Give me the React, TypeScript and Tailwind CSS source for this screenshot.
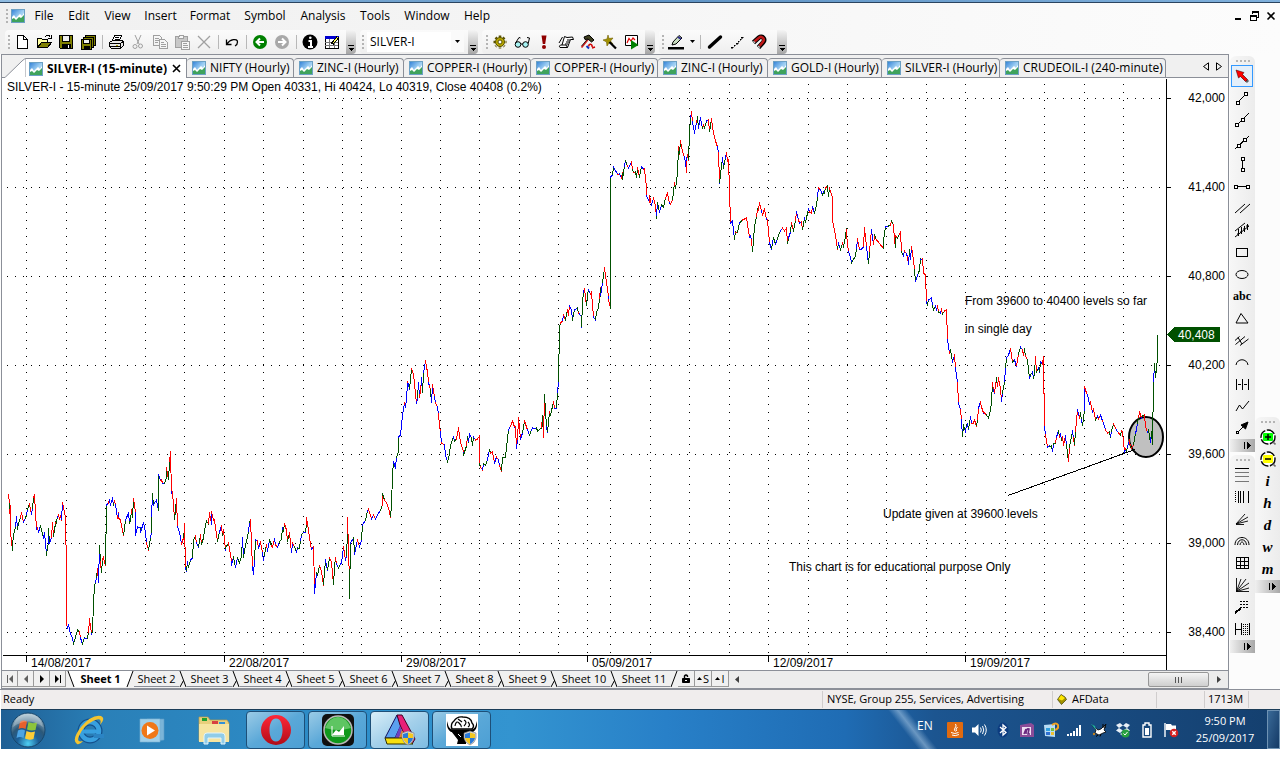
import React, { useState } from 'react';
import clsx from 'clsx';

type Children = { children?: React.ReactNode };

const UI_FONT = "font-['Open_Sans','Noto_Sans',sans-serif]";

/* ---------- data ---------- */

const menus = [
  { label: 'File', width: 'w-[34px]' },
  { label: 'Edit', width: 'w-[36px]' },
  { label: 'View', width: 'w-[41px]' },
  { label: 'Insert', width: 'w-[45px]' },
  { label: 'Format', width: 'w-[54px]' },
  { label: 'Symbol', width: 'w-[56px]' },
  { label: 'Analysis', width: 'w-[60px]' },
  { label: 'Tools', width: 'w-[44px]' },
  { label: 'Window', width: 'w-[60px]' },
  { label: 'Help', width: 'w-[40px]' },
];

const chartTabs = [
  { label: 'NIFTY (Hourly)', width: 'w-[107px]' },
  { label: 'ZINC-I (Hourly)', width: 'w-[110px]' },
  { label: 'COPPER-I (Hourly)', width: 'w-[127px]' },
  { label: 'COPPER-I (Hourly)', width: 'w-[127px]' },
  { label: 'ZINC-I (Hourly)', width: 'w-[110px]' },
  { label: 'GOLD-I (Hourly)', width: 'w-[114px]' },
  { label: 'SILVER-I (Hourly)', width: 'w-[118px]' },
  { label: 'CRUDEOIL-I (240-minute)', width: 'w-[166px]' },
];

const priceLevels = [
  ['42,000', 98],
  ['41,400', 187],
  ['40,800', 276],
  ['40,200', 365],
  ['39,600', 454],
  ['39,000', 543],
  ['38,400', 632],
] as const;

const dayLines = [
  26, 66, 105, 145, 184, 224, 263, 303, 342, 361, 401, 440, 479, 519, 558, 587, 610, 650, 689, 729, 768, 808, 847,
  886, 926, 965, 1005, 1044, 1084, 1123,
];

const dates = [
  ['14/08/2017', 26],
  ['22/08/2017', 224],
  ['29/08/2017', 401],
  ['05/09/2017', 587],
  ['12/09/2017', 768],
  ['19/09/2017', 965],
] as const;

const series = `
8,495r 9,503r 9,513g 10,506r 10,532r 12,550r 12,545g 13,535g 15,527g 16,517b 17,529b 18,524g 20,517g 21,513r 23,522r 25,518b 26,515g 27,509b 29,504g
31,514r 32,509b 33,497g 34,495r 36,529r 36,525b 38,532r 40,526b 43,538g 44,533b 45,543b 46,555b 47,548g 48,543g 48,529b 49,543g
51,538b 52,523r 53,537r 55,522g 55,526r 57,517g 58,515b 59,519r 61,514r 61,520r 62,503b 64,512r 65,518r 66,570r 66,623r
67,628r 68,625b 70,634b 72,638b 73,644b 75,637g 77,630g 79,632g 80,638r 82,644b 83,640g 84,638g 87,638b 88,633g 89,619r 91,634r 91,632b 92,632g
93,602g 94,587g 95,582g 96,578b 97,569g 98,583r 99,546b 100,562g 101,573r 102,560g 103,557r 104,563r 105,565r 106,505g 108,503b 109,500r 110,505b 112,498b
113,505b 114,501g 115,505r 117,518b 118,513r 118,518b 120,520r 123,535r 124,529g 125,520g 128,513b 129,523b 130,520g 131,510g 132,518r 133,499g
135,512r 135,535b 137,527b 140,528b 140,532g 143,523b 145,532b 146,543b 148,550r 150,538g 151,532b 151,517g 152,494b 153,505g 154,503b 156,500b
158,510b 158,475g 160,480b 161,480r 162,483r 164,483b 166,478g 166,468g 168,480r 169,462g 170,452r 171,493r 171,487b 173,503r 174,520r 176,499g
177,527r 179,532b 181,544b 183,538r 184,528g 184,524r 185,568r 186,571b 187,562g 188,567b 190,560g 192,558b 193,540g 195,536g 196,543r
198,547b 200,535g 201,544r 203,538g 204,530g 206,521g 208,524g 209,513r 211,524r 211,512b 213,520r 214,520r 217,541r 219,532g 221,526b 222,536r 223,530g 225,550r 225,548b
228,543g 231,561r 231,565b 233,557b 235,567g 237,558b 239,563g 241,556g 242,538g 243,558b 244,550g 246,541g 248,532g 249,522b 250,520g 252,567r
253,574b 254,560b 255,540g 257,541b 258,548r 260,542b 262,553r 263,560b 264,555b 266,545g 267,551r 269,540b 271,546g 272,547r 274,539r 275,545b
277,547r 279,542b 281,539g 282,528g 283,531b 284,524g 286,530r 287,541r 289,533g 291,553r 292,543b 294,547r 296,552g 297,548b 299,548g 300,541g
301,535b 303,532g 305,532b 306,524g 306,518r 308,530r 310,544r 311,549r 313,547b 314,584r 314,593b 316,573b 317,575g 319,566g 321,571r
323,585r 324,572g 325,560g 327,570b 329,558g 331,562r 333,585r 334,567g 335,558g 336,564r 338,568b 340,564g 341,563b 343,547b 345,560r 346,556b
347,533g 347,518r 349,582r 349,598g 350,543g 353,538b 354,552g 354,554b 357,540b 359,547r 361,540b 362,525g 365,520b 367,511g 368,510b 368,509r 371,519r
373,515b 375,519r 377,515b 380,510b 382,505g 382,494r 384,500g 386,503r 388,508r 390,517r 391,505g 392,475g 393,462g 395,468b 396,457b 398,452g 398,437g
400,435b 402,415b 404,403b 405,407r 406,400b 407,382b 408,384r 409,389b 411,369g 413,374r 414,384r 416,404r 417,398b 418,383g 419,397b 420,392r 421,378r 422,393b
423,373g 425,361b 427,373r 427,370g 428,383r 429,386b 430,390r 431,403g 432,385b 434,397r 435,403b 437,407r 438,414b 439,425r 440,432r 441,443b 444,445r 445,455b 447,462b 449,454g
450,445g 453,437g 454,441b 456,439g 458,428r 460,442r 463,452r 463,455b 466,446g 467,437r 468,442g 469,434b 471,438b 472,445g 473,437g 475,440b 477,439r 479,436r
479,464r 480,467g 482,470r 483,464b 485,465g 487,460g 489,450b 490,453g 492,452r 494,463r 496,457b 498,460r 499,466b 501,471r 502,458g 505,457g 506,448g 508,430g 510,426b
512,421r 514,427r 515,427b 516,449r 517,440b 518,418r 520,439r 522,433b 523,427g 524,421g 527,430r 529,435b 531,430g 532,428b 536,428b 537,431g 541,428g 542,416r
543,438g 544,395r 546,427g 547,432b 549,412g 550,415r 553,402g 554,408r 556,408b 557,393g 558,382b 559,328g 560,323g 562,321r 563,315b 565,320r 567,310g 568,315r 569,306r
571,310b 572,320b 574,310g 577,308b 578,313g 579,314r 581,317b 581,327b 582,303g 583,292g 584,289b 586,306r 587,295g 588,290g 590,294b 591,292r 592,305r 593,317r 595,320b 596,312g 598,308g 599,299g 600,288r
600,296g 602,283b 604,268g 606,283r 608,296r 608,300b 610,308r 610,177g 612,175b 613,167g 614,169b 617,174b 619,174r 621,178b 622,173r 622,179g 624,166g 625,161b 627,166g 628,168r 631,162b 632,170r 633,172g 635,172r
636,178g 637,168g 639,177r 641,167g 643,169b 644,169r 646,187r 646,196r 649,202b 649,196r 651,205r 653,198b 655,206r 656,218r 656,216g 657,203b 659,212g 661,205b 663,207g 665,198g 667,193r 669,203r
670,204b 672,200r 674,183g 675,189r 677,173g 678,147g 679,154r 680,141g 682,152r 684,157r 685,162b 686,172b 686,160r 687,155b 688,160r 689,133g 690,118g 691,112b 692,122r 694,133b 696,123b 697,117r 698,128g 700,118b
702,128b 703,125g 704,128r 706,121g 708,120b 709,132r 711,119g 713,133r 715,141r 717,147r 718,153b 719,180r 719,183b 722,158g 723,168b 725,158g 726,153b 727,161r 728,160r 729,190r 730,223r 732,221b 734,239b
735,232g 737,232r 739,223g 740,222b 742,220g 746,218r 749,237r 750,236b 751,240b 752,252r 753,240g 754,227g 756,217g 757,209r 758,210g 759,203r 761,211r 762,215b 764,209r 766,219r 767,220b 769,243r 771,249b 772,243g
773,238b 775,244g 777,239b 778,235g 780,231g 782,228b 784,231r 786,228r 787,244r 788,238g 790,232b 791,223g 793,231r 795,221g 796,212r 798,220b 799,223r 801,222b 802,230r 804,218g 805,222b 808,209g 809,212b 811,213r
812,207r 814,213b 816,205g 817,197g 818,188b 820,190r 822,195b 823,192g 824,193b 825,188g 827,186r 828,197g 829,188g 831,195r 832,197r 832,220r 835,235r 837,249r 838,243g 840,250b 842,243g 843,247r 844,242g 846,229g 846,235r 848,252r
850,257b 851,263b 855,256g 856,249g 857,239b 859,249r 861,249b 863,247b 864,228r 866,247r 868,264b 869,252g 871,230r 873,245b 874,235r 876,240g 878,242r 880,245r 883,248r 883,240g 885,227g 888,226b 890,225g 891,221r 893,225g
894,240r 895,247r 895,236g 897,238r 899,234g 900,232r 901,252r 903,256g 904,251b 906,254r 907,257b 908,265r 909,250b 910,260g 911,247b 913,260r 914,270r 915,281g 918,273b 919,270g 920,259g 922,259b 923,273r 925,275r 926,302r 927,305b
928,300g 931,298b 932,306b 933,310g 935,306g 936,310b 937,306b 938,312r 940,313g 941,309b 942,314r 944,311g 946,310r 947,340r 949,353b 950,350r 952,362g 954,355b 955,368r 957,383b 958,403r 960,410b 961,420r 962,437b
963,425g 965,432g 966,425b 967,424g 968,429b 970,417g 971,423b 973,423r 974,420r 976,426r 977,420g 978,408r 980,402b 981,407r 983,413r 984,413b 986,415r 988,418g 990,410g 991,402g 992,383g 993,390r 994,393b 996,378r 997,387g 998,378r
1000,388r 1001,402r 1002,393b 1004,382g 1005,368b 1006,358g 1008,355b 1010,349b 1012,362r 1014,360g 1016,366b 1018,354r 1020,347g 1022,350b 1023,355r 1024,349r 1025,356g 1027,360r 1029,378g 1030,375b 1032,372g 1033,378b 1034,374g 1035,357g
1036,372r 1038,368g 1039,372b 1040,362g 1042,364b 1043,357r 1044,427r 1045,435b 1047,447r 1049,446b 1051,446g 1052,452g 1053,444b 1055,443g 1056,437r 1058,431b 1059,437g 1060,434r 1061,440b 1062,437g 1063,445r 1065,436r 1066,445b 1068,462g 1069,447r
1070,442g 1072,431g 1073,438b 1074,445r 1075,432g 1077,410r 1079,418b 1080,413r 1081,420g 1082,426b 1084,410g 1084,387b 1086,393r 1087,395r 1089,404b 1090,402b 1092,412r 1093,409b 1095,420r 1097,416g 1098,419b 1100,415r 1102,421b
1103,423r 1105,430b 1107,433r 1109,432r 1110,437g 1111,431b 1113,424g 1116,430r 1118,433b 1120,435r 1121,431g 1122,432r 1124,452r 1125,449b 1126,451r 1127,447g 1129,440b 1130,447r 1131,448g 1133,445r 1135,433g 1136,430b 1137,423b 1138,418g 1139,412r 1141,418r
1142,416b 1144,415g 1145,427r 1147,432r 1148,430b 1150,443g 1151,432b 1152,445g 1153,382g 1154,364b 1155,378g 1157,358g 1157,335g`;

const barColor: Record<string, string> = { r: '#ff0000', g: '#005000', b: '#0000ff' };

const bars = series
  .trim()
  .split(/\s+/)
  .map((item) => {
    const [x, y] = item.slice(0, -1).split(',').map(Number);
    return { x, y, color: barColor[item.slice(-1)] };
  });

/* ---------- small shared pieces ---------- */

const Px: React.FC<Children & { size?: 'sm' | 'md' }> = ({ children, size = 'md' }) => (
  <svg
    viewBox="0 0 16 16"
    fill="none"
    stroke="#000"
    shapeRendering={size === 'md' ? 'crispEdges' : 'auto'}
    className="w-4 h-4 shrink-0"
  >
    {children}
  </svg>
);

const ChartIcon = () => (
  <svg viewBox="0 0 14 14" className="w-[14px] h-[14px] shrink-0">
    <defs>
      <linearGradient id="sky" x1="0" y1="0" x2="1" y2="1">
        <stop offset="0" stopColor="#2f7fd6" />
        <stop offset="0.5" stopColor="#9ccdf2" />
        <stop offset="1" stopColor="#d8eefa" />
      </linearGradient>
    </defs>
    <rect x="0.5" y="0.5" width="13" height="13" fill="url(#sky)" stroke="#6ba0c4" />
    <path d="M1 8 L3 6 L5 9 L7 7 L9 5 L11 7 L13 4 V13 H1 Z" fill="#fff" />
    <path d="M1 10 L3 9 L5 11 L8 8 L10 9 L13 6 V13 H1 Z" fill="#3fa35c" />
  </svg>
);

const Grip = () => (
  <span className="flex flex-col gap-[2px] w-[5px] pl-[2px] shrink-0">
    {[0, 1, 2, 3].map((i) => (
      <span key={i} className="w-[2px] h-[2px] bg-[#b4b4b4]" />
    ))}
  </span>
);

const Sep = () => (
  <span className="w-[6px] flex justify-center shrink-0">
    <span className="w-px h-[14px] bg-[#b8b8b8]" />
  </span>
);

const ToolButton: React.FC<Children & { label: string; wide?: string }> = ({ children, label, wide = 'w-[22px]' }) => (
  <button aria-label={label} className={clsx('h-[22px] flex items-center justify-center shrink-0', wide)}>
    {children}
  </button>
);

const Overflow = () => (
  <button
    aria-label="Toolbar options"
    className="w-[10px] h-[24px] flex items-end justify-center pb-[2px] shrink-0 rounded-r-sm bg-linear-to-b from-[#f4f4f4] to-[#a6a6a6]"
  >
    <svg viewBox="0 0 6 7" className="w-[6px] h-[7px]" shapeRendering="crispEdges">
      <path d="M0 0h6v1h-6z M0 3h6l-3 3z" fill="#000" />
    </svg>
  </button>
);

const Bar: React.FC<Children & { pad: string }> = ({ children, pad }) => (
  <div className="flex items-center h-[24px] rounded-sm bg-linear-to-b from-[#fbfbfb] to-[#eeeeee] shrink-0">
    <div className={clsx('flex items-center', pad)}>{children}</div>
    <Overflow />
  </div>
);

/* ---------- top ---------- */

const MenuBar = () => (
  <div className="flex items-center h-[26px] pl-1 pr-[3px]">
    <Grip />
    <span className="w-[18px] pl-[2px] flex">
      <ChartIcon />
    </span>
    <nav className="flex flex-1 items-center">
      {menus.map((m) => (
        <button key={m.label} className={clsx('text-center whitespace-nowrap', m.width)}>
          {m.label}
        </button>
      ))}
    </nav>
    <div className="flex items-center gap-1">
      <button aria-label="Minimize">
        <svg viewBox="0 0 12 12" className="w-3 h-3" shapeRendering="crispEdges">
          <path d="M3 8h6v2h-6z" />
        </svg>
      </button>
      <button aria-label="Restore">
        <svg viewBox="0 0 12 12" className="w-3 h-3" fill="none" stroke="#000" shapeRendering="crispEdges">
          <path d="M4.5 4V2.5H10.5V7.5H8 M4 1.5h7 M2.5 5.5H8.5V10.5H2.5Z M2 6.5h7" />
        </svg>
      </button>
      <button aria-label="Close" className="ml-px">
        <svg viewBox="0 0 12 12" className="w-3 h-3" fill="none" stroke="#000" strokeWidth="1.6">
          <path d="M2.5 2.5l7 7M9.5 2.5l-7 7" />
        </svg>
      </button>
    </div>
  </div>
);

const Toolbars = () => {
  const [symbol, setSymbol] = useState('SILVER-I');

  return (
    <div className="flex items-center h-[25px] pl-[5px] gap-1">
      <Bar pad="pl-px pr-[3px]">
        <Grip />
        <ToolButton label="New">
          <Px><path d="M3.5 1.5H9.5L13.5 5.5V14.5H3.5Z M9.5 1.5V5.5H13.5" fill="#fff" /></Px>
        </ToolButton>
        <ToolButton label="Open">
          <Px>
            <path d="M1.5 13.5V4.5H5.5L6.5 5.5H11.5V8.5" fill="#ffffa0" />
            <path d="M1.5 13.5L5.5 8.5H15.5L11.5 13.5Z" fill="#808000" />
            <path d="M9 2.5L11 1.5H13L14.5 3.5M15 1V4.5H12" />
          </Px>
        </ToolButton>
        <ToolButton label="Save">
          <Px>
            <path d="M1.5 1.5H14.5V14.5H2.5L1.5 13.5Z" fill="#808000" />
            <path d="M4.5 1.5H11.5V7.5H4.5Z" fill="#f0f0f0" />
            <path d="M4.5 10.5H12.5V14.5H4.5Z" fill="#000" />
            <path d="M10.5 11V14" stroke="#fff" />
          </Px>
        </ToolButton>
        <ToolButton label="Save all">
          <Px>
            <path d="M5.5 1.5H15.5V11.5H5.5Z" fill="#808000" />
            <path d="M3.5 3.5H13.5V13.5H3.5Z" fill="#808000" />
            <path d="M1.5 5.5H11.5V15.5H1.5Z" fill="#808000" />
            <path d="M3.5 5.5H9.5V9.5H3.5Z" fill="#f0f0f0" />
            <path d="M4.5 12.5H9.5V15.5H4.5Z" fill="#000" />
          </Px>
        </ToolButton>
        <Sep />
        <ToolButton label="Print">
          <Px>
            <path d="M4.5 6.5L6.5 1.5H13.5L11.5 6.5" fill="#fff" />
            <path d="M7 3.5h4M6.5 5h4" />
            <path d="M1.5 8.5L4.5 6.5H13.5L15.5 7.5V11.5L12.5 14.5H3.5L1.5 12.5Z" fill="#e8e8e8" />
            <path d="M1.5 9.5H12.5V14.5M2 12.5H12M12.5 9.5L15 7.5" />
            <path d="M8 11.5h2" stroke="#b0a000" />
          </Px>
        </ToolButton>
        <ToolButton label="Cut">
          <Px size="sm">
            <g stroke="#a0a0a0"><path d="M5 1L9 10M11 1L7 10" /><circle cx="5" cy="12.5" r="2" /><circle cx="10.5" cy="12" r="2" /></g>
          </Px>
        </ToolButton>
        <ToolButton label="Copy">
          <Px>
            <g stroke="#a0a0a0"><path d="M1.5 1.5H7.5L9.5 3.5V11.5H1.5Z M3 4.5h4M3 6.5h4M3 8.5h3" /><path d="M7.5 5.5H12.5L15.5 8.5V14.5H7.5Z" fill="#f6f6f6" /><path d="M9 8.5h3M9 10.5h5M9 12.5h5" /></g>
          </Px>
        </ToolButton>
        <ToolButton label="Paste">
          <Px>
            <g stroke="#a0a0a0"><path d="M1.5 2.5H13.5V13.5H1.5Z" fill="#c8c8c8" /><path d="M5.5 1.5H9.5V4.5H4.5Z" fill="#f6f6f6" /><path d="M7.5 7.5H15.5V15H7.5Z" fill="#f6f6f6" /><path d="M9 9.5h4M9 11.5h5M9 13.5h5" /></g>
          </Px>
        </ToolButton>
        <ToolButton label="Delete">
          <Px size="sm"><path d="M2 2L14 14M14 2L2 14" stroke="#a0a0a0" strokeWidth="1.3" /></Px>
        </ToolButton>
        <Sep />
        <ToolButton label="Undo">
          <Px size="sm"><path d="M2.5 5.5V10.500H7.500M3 10C6 5 13.500 4 13.500 8C13.500 10.500 12 11.500 11 12" strokeWidth="1.3" /></Px>
        </ToolButton>
        <Sep />
        <ToolButton label="Back">
          <Px size="sm">
            <circle cx="8" cy="8" r="7" fill="#008000" stroke="none" />
            <path d="M12 8H5M8 4.5L4.5 8L8 11.5" stroke="#fff" strokeWidth="2" />
          </Px>
        </ToolButton>
        <ToolButton label="Forward">
          <Px size="sm">
            <circle cx="8" cy="8" r="7" fill="#a8a8a8" stroke="none" />
            <path d="M4 8H11M8 4.5L11.5 8L8 11.5" stroke="#fff" strokeWidth="2" />
          </Px>
        </ToolButton>
        <Sep />
        <ToolButton label="Information">
          <Px size="sm">
            <circle cx="8" cy="8" r="7.5" fill="#000" stroke="none" />
            <path d="M6.5 7H9V13M6 13H11" stroke="#fff" strokeWidth="2" />
            <circle cx="8.3" cy="3.8" r="1.3" fill="#fff" stroke="none" />
          </Px>
        </ToolButton>
        <ToolButton label="Quote editor">
          <Px>
            <path d="M1.5 2.5H14.5V14.5H1.5Z" fill="#fff" />
            <path d="M1 2h14v3H1z" fill="#0000d0" stroke="none" />
            <path d="M1 8.5h13M1 11.5h13M5.5 5v9M10.5 5v9" stroke="#777" />
            <path d="M8 10L14 3" stroke="#000" strokeWidth="3" />
            <path d="M9 9L14 3" stroke="#ffff60" />
          </Px>
        </ToolButton>
      </Bar>

      <Bar pad="pr-1">
        <Grip />
        <input
          aria-label="Symbol"
          value={symbol}
          onChange={(e) => setSymbol(e.target.value)}
          className="w-[84px] h-[20px] bg-white pl-[3px] ml-[2px] outline-none"
        />
        <button aria-label="Choose symbol" className="w-[13px] h-[20px] bg-[#fafafa] flex items-center justify-center">
          <svg viewBox="0 0 5 3" className="w-[5px] h-[3px]"><path d="M0 0h5l-2.500 3z" /></svg>
        </button>
      </Bar>

      <Bar pad="pl-[2px] pr-[2px]">
        <Grip />
        <ToolButton label="Settings">
          <Px size="sm">
            <path d="M8 1.500v13M1.500 8h13M3.500 3.500l9 9M12.500 3.500l-9 9" stroke="#5a5200" strokeWidth="2.600" strokeDasharray="2 1" />
            <circle cx="8" cy="8" r="4.500" fill="#b8a800" stroke="#5a5200" />
            <circle cx="8" cy="8" r="2" fill="#fff" stroke="#5a5200" />
          </Px>
        </ToolButton>
        <ToolButton label="Explore">
          <Px size="sm">
            <circle cx="4" cy="10.500" r="2.800" fill="#a8f4f4" />
            <circle cx="11.500" cy="10.500" r="2.800" fill="#a8f4f4" />
            <path d="M7 10H9M1.500 9L5 3.500L6.500 4M14.200 9.500L15.500 4L13 3.500" />
          </Px>
        </ToolButton>
        <ToolButton label="Alerts">
          <Px size="sm"><path d="M5.500 1.500H10.500L9.200 10H6.800Z" fill="#900000" stroke="none" /><circle cx="8" cy="13" r="2" fill="#900000" stroke="none" /></Px>
        </ToolButton>
        <ToolButton label="Formulas">
          <Px size="sm">
            <path d="M6.500 2.500L4 11H2.500Q0.500 12 2 13.500H9.500L12.500 5.500H15.500L14.500 3L9 3.500Z" fill="#fff" />
            <path d="M9 6h3M8 8h3M7 10h3M4 11H8L9.500 13.500M1 9L4.500 3" />
          </Px>
        </ToolButton>
        <ToolButton label="Build">
          <Px size="sm">
            <path d="M1.500 13.500L8 5.500" stroke="#d02020" strokeWidth="1.800" />
            <path d="M1.500 12L8 4.500" strokeWidth="0.800" />
            <path d="M4 3L9 1L14 6L11.500 8L8 5L5 5.500Z" fill="#404020" />
            <path d="M9 12.500C8 9 13 10 12 13M12 14L15 13" stroke="#d00000" strokeWidth="1.600" />
            <path d="M6.500 12L9 14.500" stroke="#1030c0" strokeWidth="2" />
          </Px>
        </ToolButton>
        <ToolButton label="Wizard">
          <Px size="sm">
            <path d="M6 1L7 4.500L11 4L8.500 7L11 10L7 9L5 12L4.500 8L1 6L5 5Z" fill="#a09000" stroke="#706000" strokeWidth="0.600" />
            <path d="M7.500 8L14 14.500" strokeWidth="2.200" />
          </Px>
        </ToolButton>
        <ToolButton label="Run">
          <Px size="sm">
            <path d="M1.500 1.500H13.500V11.500H1.500Z" fill="#fff" />
            <path d="M3 9L5 4.500L7 7L9 4L11 6" stroke="#e00000" strokeWidth="1.200" />
            <path d="M7 6V15.500L14.500 11Z" fill="#008000" stroke="none" />
          </Px>
        </ToolButton>
      </Bar>

      <Bar pad="pl-px pr-[6px]">
        <Grip />
        <ToolButton label="Line colour">
          <Px size="sm">
            <path d="M5 8L11 1.500L14 4L8 10L4 11Z" fill="#c8dcc0" />
            <path d="M10 3L13 5" stroke="#303090" strokeWidth="2" />
            <path d="M0 13h16v2.500H0z" fill="#000" stroke="none" />
          </Px>
        </ToolButton>
        <ToolButton label="Choose line colour" wide="w-[10px]">
          <svg viewBox="0 0 5 3" className="w-[5px] h-[3px]"><path d="M0 0h5l-2.500 3z" /></svg>
        </ToolButton>
        <Sep />
        <ToolButton label="Thick line" wide="w-6">
          <Px size="sm"><path d="M2.500 13L13.500 3" strokeWidth="3.400" strokeLinecap="round" /></Px>
        </ToolButton>
        <ToolButton label="Dotted line" wide="w-[20px]">
          <Px><path d="M2 13h2v1h-2z M5 11h1v1h-1z M7 9h2v1h-2z M9 7h1v1h-1z M11 5h1v1h-1z M12 3h2v1h-2z" stroke="#000" strokeWidth="0.500" fill="#000" /></Px>
        </ToolButton>
        <ToolButton label="Magnet" wide="w-6">
          <Px size="sm">
            <path d="M2.500 8.500L8 3.500C11 1 15 5 12 8.500L7.500 13.500" strokeWidth="4.600" />
            <path d="M3.500 7.500L8 3.700C10.800 1.500 14.500 5 11.700 8.200L8.500 12" stroke="#c01818" strokeWidth="2.600" />
            <path d="M2.500 7L4 9M7 12L9 13.500" stroke="#ccc" strokeWidth="1.200" />
          </Px>
        </ToolButton>
      </Bar>
    </div>
  );
};

/* ---------- chart pane ---------- */

const ChartTabs = () => (
  <div className="flex items-end h-[23px] bg-[#f0f0f0] border-b border-[#8b8f98] text-[12px]">
    <div className="flex -mb-px h-[20px] items-stretch">
      <svg viewBox="0 0 24 20" className="w-6 h-5 shrink-0">
        <path d="M3 19.500L20 3Q22.500 0.500 24 0.500V20H3" fill="#fff" stroke="#8b8f98" />
        <path d="M3.500 19h21v1h-21z" fill="#fff" />
      </svg>
      <div className="w-[161px] bg-white border-t border-r border-[#8b8f98] flex items-center font-bold whitespace-nowrap pl-[3px] pr-[5px]">
        <ChartIcon />
        <button className="pl-[4px] flex-1 text-left">SILVER-I (15-minute)</button>
        <button aria-label="Close tab">
          <svg viewBox="0 0 9 9" className="w-[9px] h-[9px]" fill="none" stroke="#000" strokeWidth="1.600"><path d="M1 1l7 7M8 1l-7 7" /></svg>
        </button>
      </div>
    </div>
    {chartTabs.map((t, i) => (
      <button
        key={i}
        className={clsx(
          'h-[19px] flex items-center gap-1 pl-[5px] border-t border-r border-[#8b8f98] rounded-t-sm whitespace-nowrap',
          t.width
        )}
      >
        <ChartIcon />
        {t.label}
      </button>
    ))}
    <div className="flex-1 h-full flex items-center justify-end gap-[5px] pr-[5px]">
      <button aria-label="Previous tabs">
        <svg viewBox="0 0 8 9" className="w-2 h-[9px]" fill="none" stroke="#000"><path d="M6.500 0.800V8.200L1.500 4.500Z" /></svg>
      </button>
      <button aria-label="Next tabs">
        <svg viewBox="0 0 8 9" className="w-2 h-[9px]" fill="none" stroke="#000"><path d="M1.500 0.800V8.200L6.500 4.500Z" /></svg>
      </button>
    </div>
  </div>
);

const PriceChart = () => (
  <svg
    viewBox="2 78 1226 592"
    className="block w-full h-auto bg-white font-['Liberation_Sans',Arial,sans-serif] text-[12px]"
    shapeRendering="crispEdges"
  >
    {priceLevels.map(([label, y]) => (
      <g key={label}>
        <path d={`M7 ${y + 0.5}H1164`} stroke="#000" strokeDasharray="1 7" />
        <path d={`M1166 ${y + 0.5}H1171`} stroke="#000" />
        <text x="1225" y={y + 4} textAnchor="end">{label}</text>
      </g>
    ))}
    {dayLines.map((x) => (
      <path key={x} d={`M${x + 0.5} 84V655`} stroke="#000" strokeDasharray="1 7" />
    ))}
    <path d="M3 655.500H1166M1166.500 79V670" stroke="#000" />
    {dates.map(([label, x]) => (
      <g key={label}>
        <path d={`M${x + 0.5} 655V662`} stroke="#000" />
        <text x={x + 5} y="667">{label}</text>
      </g>
    ))}

    <ellipse cx="1146" cy="437" rx="17" ry="20" fill="#c0c0c0" stroke="#000" strokeWidth="2" shapeRendering="auto" />

    {bars.slice(1).map((b, i) => (
      <path key={i} d={`M${bars[i].x + 0.5} ${bars[i].y}L${b.x + 0.5} ${b.y}`} stroke={b.color} strokeLinecap="square" />
    ))}

    <path d="M1008 495.500L1135 449.500" stroke="#000" />

    <rect x="3" y="80" width="550" height="14" fill="#fff" />
    <text x="7" y="91">SILVER-I - 15-minute 25/09/2017 9:50:29 PM Open 40331, Hi 40424, Lo 40319, Close 40408 (0.2%)</text>
    <text x="965" y="305">From 39600 to 40400 levels so far</text>
    <text x="965" y="333">in single day</text>
    <text x="883" y="518">Update given at 39600 levels</text>
    <text x="789" y="571">This chart is for educational purpose Only</text>

    <path d="M1167 334.500L1174 327H1220V342H1174Z" fill="#005000" />
    <text x="1178" y="339" fill="#fff">40,408</text>
  </svg>
);

const Slant = ({ kind }: { kind: 'first' | 'active' | 'mid' | 'last' }) => (
  <svg viewBox="0 0 8 16" className="w-2 h-4 shrink-0" fill="none" stroke="#000">
    {kind === 'first' && <path d="M0.500 0L7.500 16H8V0Z" fill="#fff" stroke="none" />}
    {kind === 'active' && <path d="M7.500 0L0.500 16H0V0Z" fill="#fff" stroke="none" />}
    {(kind === 'first' || kind === 'mid') && <path d="M1 0L7 16" />}
    {kind === 'mid' && <path d="M4.500 9.500L1 16" />}
    {(kind === 'active' || kind === 'last') && <path d="M7 0L1 16" />}
  </svg>
);

const navIcons = [
  { label: 'First sheet', d: 'M1 0h1v8h-1z M7 0v8l-4-4z', fill: '#606060' },
  { label: 'Previous sheet', d: 'M6 0v8l-4-4z', fill: '#606060' },
  { label: 'Next sheet', d: 'M2 0v8l4-4z', fill: '#000' },
  { label: 'Last sheet', d: 'M1 0v8l4-4z M6 0h1v8h-1z', fill: '#000' },
];

const SheetBar = () => {
  const [active, setActive] = useState(1);

  return (
    <div className="flex items-start h-[18px] bg-[#f0f0f0] border-t border-[#8b8f98] text-[11px]">
      {navIcons.map((n) => (
        <button key={n.label} aria-label={n.label} className="w-4 h-4 border-r border-b border-[#9a9a9a] flex items-center justify-center shrink-0">
          <svg viewBox="0 0 8 8" className="w-2 h-2"><path d={n.d} fill={n.fill} /></svg>
        </button>
      ))}
      <span className="w-px" />
      <Slant kind="first" />
      {Array.from({ length: 11 }, (_, i) => i + 1).map((n) => (
        <React.Fragment key={n}>
          <button
            onClick={() => setActive(n)}
            className={clsx(
              'h-4 leading-4 whitespace-nowrap shrink-0 border-b',
              n === 1 ? 'w-[51px]' : n > 9 ? 'w-[52px]' : 'w-[45px]',
              n === active ? 'bg-white font-bold border-white' : 'border-[#8b8f98]'
            )}
          >
            Sheet {n}
          </button>
          <Slant kind={n === 1 ? 'active' : n === 11 ? 'last' : 'mid'} />
        </React.Fragment>
      ))}
      <button aria-label="Lock" className="w-[17px] h-4 border-r border-b border-[#9a9a9a] flex items-center justify-center shrink-0">
        <svg viewBox="0 0 8 9" className="w-2 h-[9px]" fill="none" stroke="#000"><path d="M2.500 4V2Q4 0 5.500 2V3" strokeWidth="1.400" /><path d="M0.500 4.500h7v4h-7z" fill="#000" /><path d="M3 6.500h2" stroke="#fff" /></svg>
      </button>
      {['S', 'I'].map((c) => (
        <button key={c} className="w-[17px] h-4 border-r border-b border-[#9a9a9a] flex items-center justify-center gap-px leading-4 shrink-0">
          <svg viewBox="0 0 5 3" className="w-[5px] h-[3px]"><path d="M0 3h5l-2.500-3z" /></svg>
          {c}
        </button>
      ))}
      <div className="flex-1 h-[17px] flex items-center bg-[#ececec]">
        <button aria-label="Scroll left" className="w-4 flex justify-center">
          <svg viewBox="0 0 4 7" className="w-1 h-[7px]"><path d="M4 0v7L0 3.500z" fill="#404040" /></svg>
        </button>
        <span className="flex-1" />
        <span className="w-[61px] h-[15px] rounded-xs border border-[#979797] bg-linear-to-b from-[#f4f4f4] to-[#cfcfcf] flex items-center justify-center gap-[2px]">
          {[0, 1, 2].map((i) => (
            <span key={i} className="w-px h-[6px] bg-[#555]" />
          ))}
        </span>
        <button aria-label="Scroll right" className="w-[19px] flex justify-center">
          <svg viewBox="0 0 4 7" className="w-1 h-[7px]"><path d="M0 0v7l4-3.500z" fill="#404040" /></svg>
        </button>
      </div>
    </div>
  );
};

/* ---------- drawing tools on the right ---------- */

const node = (x: number, y: number) => <rect x={x - 1} y={y - 1} width="3" height="3" fill="#fff" />;

const drawTools = [
  { label: 'Trend line', icon: <Px><path d="M4 12L12 4" />{node(3.5, 12.5)}{node(11.5, 3.5)}</Px> },
  { label: 'Ray', icon: <Px><path d="M3 13L15 1" />{node(2.5, 12.5)}{node(8.5, 7.5)}</Px> },
  { label: 'Extended line', icon: <Px><path d="M1 15L15 2" />{node(4.5, 11.5)}{node(10.5, 5.5)}</Px> },
  { label: 'Vertical line', icon: <Px><path d="M8.500 2V14" />{node(8.5, 2.5)}{node(8.5, 13.5)}</Px> },
  { label: 'Horizontal line', icon: <Px><path d="M2 8.500H14" />{node(1.5, 8.5)}{node(13.5, 8.5)}</Px> },
  { label: 'Parallel lines', icon: <Px size="sm"><path d="M1 13L11 4M6 13L16 4" /></Px> },
  {
    label: 'Regression channel',
    icon: <Px size="sm"><path d="M1 9L11 1M1 15L15 4M4.500 7v7M7.500 5v7M10.500 4v6M13.500 2v6M3 12h2M6 10h2M9 7h2M12 4h3" /></Px>,
  },
  { label: 'Rectangle', icon: <Px><path d="M2.500 4.500H13.500V12.500H2.500Z" /></Px> },
  { label: 'Ellipse', icon: <Px size="sm"><ellipse cx="8" cy="8.500" rx="6" ry="4" /></Px> },
  { label: 'Text', icon: <span className="text-[12px] font-bold font-['Liberation_Serif','Times_New_Roman',serif] leading-4">abc</span> },
  { label: 'Triangle', icon: <Px size="sm"><path d="M2 13L7 3.500L14 13Z" /></Px> },
  { label: 'Pitchfork', icon: <Px size="sm"><path d="M1 8.500L5.500 4.500M1.500 12.500L11 4.500M6 13.500L14.500 7M4 5.500L8 12" /></Px> },
  { label: 'Arc', icon: <Px size="sm"><path d="M2 11C3 4 13 4 14 11" /></Px> },
  { label: 'Cycles', icon: <Px><path d="M2.500 3V14M8.500 3V14M14.500 3V14M4 8.500h3M10 8.500h3" /></Px> },
  { label: 'Zig zag', icon: <Px size="sm"><path d="M2 13L5.500 7L8.500 11L15 3" /></Px> },
  {
    label: 'Arrow',
    icon: <Px size="sm"><path d="M4 12L9 7" /><path d="M7 5L14 2L11.500 9Z" fill="#000" /><rect x="2.500" y="11.500" width="2" height="2" /></Px>,
  },
];

const fiboTools = [
  { label: 'Retracement', icon: <Px><path d="M1 1.500h14" /><path d="M1 5.500h14M1 9.500h14M1 14.500h14" stroke="#777" /></Px> },
  { label: 'Time zones', icon: <Px><path d="M1.500 2V14" strokeDasharray="1 1" /><path d="M4.500 2V14M6.500 2V14M9.500 2V14M14.500 2V14" /></Px> },
  { label: 'Fan', icon: <Px size="sm"><path d="M2 13L11 3M2 13L14 6M2 13L14 10M2 13.500H10" strokeWidth="0.900" /></Px> },
  { label: 'Fibonacci arcs', icon: <Px size="sm"><path d="M1 12C1 2 15 2 15 12M3.500 12C4 5 12 5 12.500 12M6 12C6.500 8 9.500 8 10 12" /></Px> },
  { label: 'Gann square', icon: <Px><path d="M2.500 2.500H14.500V13.500H2.500ZM6.500 2.500V13.500M10.500 2.500V13.500M2.500 6.500H14.500M2.500 10.500H14.500" /></Px> },
  { label: 'Gann fan', icon: <Px size="sm"><path d="M2.500 1V14.500H15M2.500 14.500L7 2M2.500 14.500L12 2M2.500 14.500L15 6M2.500 14.500L15 11" strokeWidth="0.900" /></Px> },
  { label: 'Extension', icon: <Px><path d="M6 2.500h9M6 5.500h9M6 8.500h9" strokeDasharray="2 1" /><path d="M1 14L7 9" strokeWidth="2" /></Px> },
  { label: 'Time extension', icon: <Px><path d="M1.500 2V14M1 8.500H7M7.500 2V14" /><path d="M9.500 3V14M11.500 3V14M13.500 3V14" strokeDasharray="1 1" /><path d="M15.500 2V14" /></Px> },
];

const Zoom = ({ color, plus }: { color: string; plus?: boolean }) => (
  <Px size="sm">
    <circle cx="8" cy="8" r="7" fill="#fff" strokeWidth="1.400" strokeDasharray="9 1.500" />
    <rect x="3" y="4" width="10" height="8" rx="1" fill={color} stroke="none" />
    <path d={plus ? 'M5 8h6M8 5v6' : 'M5 8h6'} strokeWidth="1.500" />
    <path d="M13 13L15.500 15.500" stroke="#707070" strokeWidth="1.600" />
  </Px>
);

const SideGrip = () => (
  <span className="h-[9px] flex justify-center items-center gap-[2px]">
    {[0, 1, 2, 3].map((i) => (
      <span key={i} className="w-[2px] h-[2px] bg-[#b4b4b4]" />
    ))}
  </span>
);

const SideOverflow = () => (
  <button aria-label="Toolbar options" className="h-[13px] flex items-center justify-end pr-1 bg-linear-to-r from-[#f0f0f0] to-[#a8a8a8]">
    <svg viewBox="0 0 7 7" className="w-[7px] h-[7px]" shapeRendering="crispEdges"><path d="M0 0h1v7h-1z M3 0l4 3.500l-4 3.500z" /></svg>
  </button>
);

const sidePanel = 'w-[25px] flex flex-col rounded-t-md bg-linear-to-r from-[#f7f7f7] to-[#ececec]';

const SideBars = () => (
  <aside className="w-[51px] shrink-0 flex items-start pt-[2px] pl-px bg-[#fcfcfc]">
    <div className="flex flex-col gap-[3px]">
      <div className={sidePanel}>
        <SideGrip />
        <button aria-label="Select" className="w-[22px] h-[22px] ml-px border border-[#3399ff] bg-[#e4effa] flex items-center justify-center">
          <Px size="sm">
            <path d="M5 5L14 14" stroke="#606060" strokeWidth="3" />
            <path d="M2 2L10 4.500L8.500 6.500L13.500 11.500L11.500 13.500L6.500 8.500L4.500 10Z" fill="#ff0000" stroke="#300" strokeWidth="0.500" />
          </Px>
        </button>
        {drawTools.map((t) => (
          <ToolButton key={t.label} label={t.label} wide="w-6">{t.icon}</ToolButton>
        ))}
        <SideOverflow />
      </div>
      <div className={sidePanel}>
        <SideGrip />
        {fiboTools.map((t) => (
          <ToolButton key={t.label} label={t.label} wide="w-6">{t.icon}</ToolButton>
        ))}
        <SideOverflow />
      </div>
    </div>
    <div className={clsx(sidePanel, 'mt-[361px]')}>
      <SideGrip />
      <ToolButton label="Zoom in" wide="w-[25px]"><Zoom color="#00ff00" plus /></ToolButton>
      <ToolButton label="Zoom out" wide="w-[25px]"><Zoom color="#ffff00" /></ToolButton>
      {['i', 'h', 'd', 'w', 'm'].map((c) => (
        <button key={c} className="w-[25px] h-[22px] text-center font-bold italic text-[15px] leading-[20px] font-['Liberation_Serif','Times_New_Roman',serif]">
          {c}
        </button>
      ))}
      <SideOverflow />
    </div>
  </aside>
);

/* ---------- bottom ---------- */

const StatusBar = () => (
  <footer className="flex items-center h-[19px] bg-[#f0eded] ml-px pl-[2px] text-[11px]">
    <span className="flex-1">Ready</span>
    <span className="w-[230px] border-l border-[#d0cdcd] pl-1 whitespace-nowrap">NYSE, Group 255, Services, Advertising</span>
    <span className="w-[104px] border-l border-[#d0cdcd] pl-1 flex items-center gap-[5px]">
      <svg viewBox="0 0 10 11" className="w-[10px] h-[11px]">
        <path d="M4 0.500L0.500 5.500L4.500 10.500L9.500 5.500L8 3Z" fill="#a09000" stroke="#404000" strokeWidth="0.700" />
        <path d="M4.200 1L8 4L5 6.500L1.500 5Z" fill="#ffe800" />
      </svg>
      AFData
    </span>
    <span className="w-[48px] h-4 border-l border-[#d0cdcd]" />
    <span className="w-[45px] border-x border-[#d0cdcd] pl-[3px]">1713M</span>
    <span className="w-[31px]" />
  </footer>
);

const Shield = () => (
  <g transform="translate(17 17)">
    <path d="M7 0L13 2V7Q12 12 7 14Q2 12 1 7V2Z" fill="#d8d8d8" stroke="#777" strokeWidth="0.600" />
    <path d="M7 1.500V7H2V3Z M7 7H12Q11 11 7 13Z" fill="#2a7ad8" />
    <path d="M7 1.500V7H12V3Z M7 7H2Q3 11 7 13Z" fill="#f4c820" />
  </g>
);

const TaskButton: React.FC<Children & { label: string; active?: boolean }> = ({ children, label, active }) => (
  <button
    aria-label={label}
    className={clsx(
      'w-[59px] h-[38px] rounded-sm border border-[#1d4f78] flex items-center justify-center',
      active
        ? 'bg-linear-to-br from-[#d8eef8] via-[#a4d0ea] to-[#7ebce2]'
        : 'bg-linear-to-br from-[#9acbe6] via-[#5aa8d8] to-[#4c9fd4]'
    )}
  >
    {children}
  </button>
);

const trayIcons = [
  {
    label: 'Java',
    art: <><rect width="16" height="16" rx="1" fill="#e06a10" /><path d="M8.500 2Q10 4 8 6Q6.500 8 8.500 9.500M10.500 5Q8 7 9.500 9M4 10.500Q8 12.500 11.500 10.500M5 13Q8 14.500 12 12.500" stroke="#fff" fill="none" /></>,
  },
  {
    label: 'Volume',
    art: <><path d="M1 5.500H4L7.500 2V14L4 10.500H1Z" fill="#fff" /><path d="M9.500 5.500Q11 8 9.500 10.500M11.500 4Q14 8 11.500 12M13.500 2.500Q17 8 13.500 13.500" stroke="#fff" fill="none" /></>,
  },
  {
    label: 'Bluetooth',
    art: <><ellipse cx="8" cy="8" rx="5.500" ry="7.500" fill="#0c3c80" /><path d="M5 5L11 10.500L8 13V3L11 5.500L5 11" stroke="#fff" strokeWidth="1.300" fill="none" /></>,
  },
  {
    label: 'OneNote',
    art: <><path d="M1 3L12 1L15 3V15H1Z" fill="#8b4c98" /><path d="M3 5H12V13H3Z" fill="#efdff2" /><path d="M5 12L7 7M7 12Q7 6 10 7L9 12H11" stroke="#6a2a80" strokeWidth="1.600" fill="none" /></>,
  },
  {
    label: 'Updates',
    art: <><path d="M1 3L12 2V15L2 14Z" fill="#b8dcf4" /><path d="M3 6h4v3H3z" fill="#30a0e0" /><path d="M8 6h3v3H8z" fill="#70c040" /><path d="M3 10h4v3H3z" fill="#3070d0" /><path d="M8 10h3v3H8z" fill="#f0c030" /><path d="M9 3Q13 0 15 3Q16 7 12 8" stroke="#f0a020" strokeWidth="2" fill="none" /></>,
  },
  { label: 'Network', art: <path d="M0 12h2v2H0z M3 11h2v3H3z M6 9h2v5H6z M9 6h2v8H9z M12 3h2v11h-2z" fill="#fff" /> },
  {
    label: 'Messenger',
    art: <><path d="M1 3L5 8L4 11L8 13L12 11L15 10L13 8L15 2L10 7L7 8Z" fill="#fff" stroke="#000" strokeWidth="0.800" /><path d="M0 2L4 4L5 8Z" fill="#20b0a0" /><path d="M5 14.500L7 13M9 14.500L10 12M12 2V6M14 3V6" stroke="#000" /><circle cx="3" cy="12" r="1.200" fill="#c08020" /></>,
  },
  {
    label: 'Dropbox',
    art: <><path d="M1 3L5 1L8 3.500L4 6Z M15 3L11 1L8 3.500L12 6Z M1 8.500L4 6L8 8.500L5 11Z M15 8.500L12 6L8 8.500L11 11Z M5 12L8 10L11 12L8 14Z" fill="#e8f0f8" /><circle cx="10.500" cy="11.500" r="4" fill="#28a040" /><path d="M8.500 11.500L10 13L12.500 10" stroke="#fff" fill="none" /></>,
  },
  {
    label: 'Battery',
    art: <><path d="M6 1H10V3H12V15H4V3H6Z" fill="none" stroke="#fff" strokeWidth="1.400" /><path d="M6 6h4v7H6z" fill="#fff" /></>,
  },
  {
    label: 'Action center',
    art: <><path d="M2 1V15" stroke="#fff" strokeWidth="1.400" /><path d="M3 2H8L9 3.500H13V9H8L7 8H3Z" fill="#fff" /><circle cx="11" cy="11" r="4.300" fill="#d42020" /><path d="M9.300 9.300l3.400 3.400M12.700 9.300l-3.400 3.400" stroke="#fff" strokeWidth="1.400" /></>,
  },
];

const Taskbar = () => (
  <div className="ml-px h-[40px] flex items-center border-t border-[#1b3c58] text-white bg-[linear-gradient(90deg,#1f5f94_0%,#2a80b8_8%,#2e90cc_30%,#3394d0_40%,#2880c8_52%,#1f6cb4_66%,#1c5590_73%,#143f6e_100%)] overflow-hidden">
    <div className="flex flex-1 items-center gap-[3px]">
      <button aria-label="Start" className="w-[54px] flex justify-center">
        <svg viewBox="0 0 36 36" className="w-9 h-9">
          <defs>
            <radialGradient id="orb" cx="0.5" cy="0.9" r="0.9">
              <stop offset="0" stopColor="#4fd0f4" />
              <stop offset="0.35" stopColor="#1c5f98" />
              <stop offset="0.6" stopColor="#2c5878" />
              <stop offset="1" stopColor="#b4ccd8" />
            </radialGradient>
          </defs>
          <circle cx="18" cy="18" r="17" fill="url(#orb)" stroke="#17466c" />
          <path d="M10 10Q13 7.500 17 9.500L15.500 17Q12 15 8.500 17Z" fill="#e8602c" />
          <path d="M18.500 10Q22 12 27 10.500L25.500 18Q21 19 17 17.500Z" fill="#8cc43c" />
          <path d="M8 18.500Q12 16.500 15 18.500L13.500 26Q10 24 6.500 26Z" fill="#4ca4e4" />
          <path d="M16.500 19Q20 21 25 19.500L23.500 27Q19 28.500 15 26.500Z" fill="#fccc38" />
          <path d="M3 15Q18 4 33 15Q30 2 18 2Q6 2 3 15" fill="#fff" opacity="0.25" />
        </svg>
      </button>
      <button aria-label="Internet Explorer" className="w-[62px] flex justify-center">
        <svg viewBox="0 0 32 32" className="w-8 h-8">
          <circle cx="17" cy="17" r="9" fill="none" stroke="#14508c" strokeWidth="7" />
          <circle cx="17" cy="17" r="9" fill="none" stroke="#38a0e0" strokeWidth="4.500" />
          <path d="M10 17.500H25" stroke="#38a0e0" strokeWidth="4" />
          <path d="M20 20H31V24H21Z" fill="#2b84c4" />
          <path d="M4 30Q-2 26 8 13Q19 0 28 2Q33 4 27 11Q30 2 20 7Q10 12 6 22Q3 29 10 27Q7 31 4 30" fill="#f4c430" />
        </svg>
      </button>
      <button aria-label="Media Player" className="w-[58px] flex justify-center">
        <svg viewBox="0 0 28 28" className="w-7 h-7">
          <path d="M9 3H26V24L9 26Z" fill="#7ab4d8" stroke="#5a9cc8" strokeWidth="0.600" />
          <path d="M2 3H22V26H2Z" fill="#a0d0ea" stroke="#7ab0d0" strokeWidth="0.600" />
          <circle cx="12" cy="14.500" r="8.500" fill="#f07818" />
          <path d="M9 9.500L17 14.500L9 19.500Z" fill="#fff" />
        </svg>
      </button>
      <button aria-label="Explorer" className="w-[59px] flex justify-center">
        <svg viewBox="0 0 34 32" className="w-[34px] h-8">
          <path d="M2 3H11L13 6H30L32 9V27H2Z" fill="#e8cf7c" stroke="#b89a48" strokeWidth="0.700" />
          <path d="M5 4h5v3H5z" fill="#20a030" />
          <path d="M15 7h6v3h-6z" fill="#d84040" />
          <path d="M22 8h6v3h-6z" fill="#3090d8" />
          <path d="M2 10H32V28H2Z" fill="#f6e4a0" />
          <path d="M7 30V22Q7 19 10 19H25Q28 19 28 22V30H24V24H11V30Z" fill="#90cce8" stroke="#e0f4fc" />
        </svg>
      </button>
      <TaskButton label="Opera">
        <svg viewBox="0 0 32 32" className="w-8 h-8">
          <defs>
            <linearGradient id="opera" x1="0" y1="0" x2="0" y2="1">
              <stop offset="0" stopColor="#ff2838" />
              <stop offset="1" stopColor="#b00c18" />
            </linearGradient>
          </defs>
          <path fillRule="evenodd" d="M16 1A15 15 0 1 0 16 31A15 15 0 1 0 16 1ZM16 4.500C21 4.500 22.500 11 22.500 16C22.500 21 21 27.500 16 27.500C11 27.500 9.500 21 9.500 16C9.500 11 11 4.500 16 4.500Z" fill="url(#opera)" />
        </svg>
      </TaskButton>
      <TaskButton label="Quotes">
        <svg viewBox="0 0 32 32" className="w-8 h-8">
          <rect width="32" height="32" rx="5" fill="#101010" />
          <circle cx="16" cy="16" r="14" fill="#10981c" stroke="#b8b8b8" strokeWidth="1.500" />
          <path d="M3 14Q8 3 16 3Q24 3 29 14Q16 18 3 14" fill="#80d880" opacity="0.7" />
          <path d="M10 12V22H23" stroke="#fff" fill="none" />
          <path d="M10 21L14 16L17 18L22 12V21Z" fill="#fff" />
        </svg>
      </TaskButton>
      <TaskButton label="AmiBroker" active>
        <svg viewBox="0 0 32 32" className="w-8 h-8">
          <path d="M13 1L1 24H11L17 11Z" fill="#5aa0f0" stroke="#101060" />
          <path d="M13 1H18L31 25L28 30L22 24L16 11Z" fill="#e82078" stroke="#400020" />
          <path d="M11 24L16 12L18 17L15 24Z" fill="#7040c0" />
          <path d="M15 24L18 16L22 24Z" fill="#f08020" />
          <path d="M1 24H22L29 30H3Z" fill="#f8e010" stroke="#303000" />
          <Shield />
        </svg>
      </TaskButton>
      <TaskButton label="Brain Trader">
        <svg viewBox="0 0 32 32" className="w-8 h-8">
          <rect width="32" height="32" fill="#fff" />
          <path d="M6 15Q4 10 8 7Q11 2 17 3Q25 3 26 9Q29 12 26 15Z" fill="#fff" stroke="#000" strokeWidth="1.400" />
          <path d="M9 12Q10 6 13 9T15 13M18 6Q22 8 18 12M22 8Q25 11 22 13M12 5L16 8" stroke="#000" fill="none" strokeWidth="1.200" />
          <path d="M2 7Q-1 13 5 18H27Q33 13 30 7Q31 13 26 15.500H6Q1 13 2 7" fill="#000" />
          <path d="M5 17H27L24 26H20V30H11L12 26Z" fill="#000" />
          <path d="M12 20L15 23" stroke="#fff" />
          <Shield />
        </svg>
      </TaskButton>
    </div>
    <div className="flex items-center h-full text-[12px] pl-12 bg-[linear-gradient(52deg,transparent_35%,rgba(200,225,245,0.45)_42%,transparent_49%)] bg-[length:110px_100%] bg-no-repeat">
      <span className="w-[26px] pb-2">EN</span>
      {trayIcons.map((t) => (
        <button key={t.label} aria-label={t.label} className="w-6 flex justify-center">
          <svg viewBox="0 0 16 16" className="w-4 h-4">{t.art}</svg>
        </button>
      ))}
      <div className="w-[84px] text-center text-[11px] leading-[17px] pb-px">
        <div>9:50 PM</div>
        <div>25/09/2017</div>
      </div>
      <button aria-label="Show desktop" className="w-[13px] h-full border border-[#6f93b4] bg-linear-to-br from-[#3a6a98] to-[#143a66]" />
    </div>
  </div>
);

export default function App() {
  return (
    <div className={clsx('bg-white text-black text-[12px]', UI_FONT)}>
      <div className="bg-linear-to-r from-[#f0f0f0] to-[#fcfcfc]">
        <div className="h-[3px] bg-linear-to-r from-[#8fbbe0] via-[#5f93c4] to-[#7fb0dc] border-b border-[#2a4460]" />
        <MenuBar />
        <Toolbars />
      </div>
      <div className="flex pl-px border-b border-[#8b8f98] bg-[#fcfcfc]">
        <main className="flex-1 min-w-0 border border-[#8b8f98]">
          <ChartTabs />
          <PriceChart />
          <SheetBar />
        </main>
        <SideBars />
      </div>
      <StatusBar />
      <Taskbar />
    </div>
  );
}
